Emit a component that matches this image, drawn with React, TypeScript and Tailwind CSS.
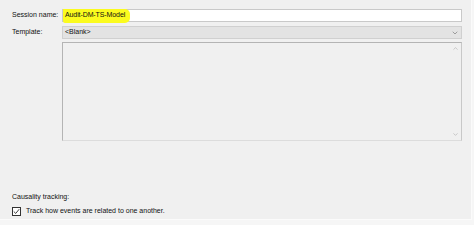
import { ChevronDown, ChevronUp } from 'lucide-react';

export default function App() {
  return (
    <div className="w-[474px] h-[225px] bg-[#f6f6f6] overflow-hidden">
      <div
        className="w-[472px] h-[220px] bg-[#f0f0f0] border-r border-b border-[#fbfbfb] flex flex-col text-[7px] text-[#111] whitespace-nowrap pl-[12px] pr-[9px] pt-[9px]"
        style={{ fontFamily: '"Liberation Sans", Arial, sans-serif' }}
      >
        <div className="flex items-center h-[13px]">
          <div className="w-[50px] shrink-0">Session name:</div>
          <div className="flex-1 h-[13px] bg-white border border-[#c9c9c9] relative flex items-center">
            <div className="absolute left-0 top-[-1px] h-[14px] w-[67px] bg-[#fbfb1e] rounded-r-[5px] rounded-bl-[2px]" />
            <span className="relative pl-[2px] tracking-[-0.1px]">Audit-DM-TS-Model</span>
          </div>
        </div>
        <div className="flex items-center h-[13px] mt-[4px]">
          <div className="w-[50px] shrink-0">Template:</div>
          <div className="flex-1 h-[13px] bg-[#e3e3e3] border border-[#d0d0d0] flex items-center justify-between pl-[2px] pr-[2px]">
            <span>&lt;Blank&gt;</span>
            <ChevronDown className="w-[8px] h-[8px] text-[#777]" strokeWidth={2} />
          </div>
        </div>
        <div className="flex h-[99px] mt-[3px]">
          <div className="w-[50px] shrink-0" />
          <div className="flex-1 border border-[#b4b4b4] border-r-[#c8c8c8] border-b-[#dcdcdc] bg-[#f0f0f0] flex justify-end">
            <div className="w-[12px] flex flex-col items-center justify-between py-[2px]">
              <ChevronUp className="w-[7px] h-[7px] text-[#aaa]" strokeWidth={2} />
              <ChevronDown className="w-[7px] h-[7px] text-[#aaa]" strokeWidth={2} />
            </div>
          </div>
        </div>
        <div className="mt-[51px] leading-[10px]">Causality tracking:</div>
        <div className="flex items-center gap-[5px] mt-[4px]">
          <div className="w-[9px] h-[9px] border border-[#333] bg-white flex items-center justify-center">
            <svg viewBox="0 0 9 9" className="w-[7px] h-[7px]">
              <path d="M1 4.5 L3.5 7 L8 1.5" fill="none" stroke="#333" strokeWidth="1.2" />
            </svg>
          </div>
          <span>Track how events are related to one another.</span>
        </div>
      </div>
    </div>
  );
}
